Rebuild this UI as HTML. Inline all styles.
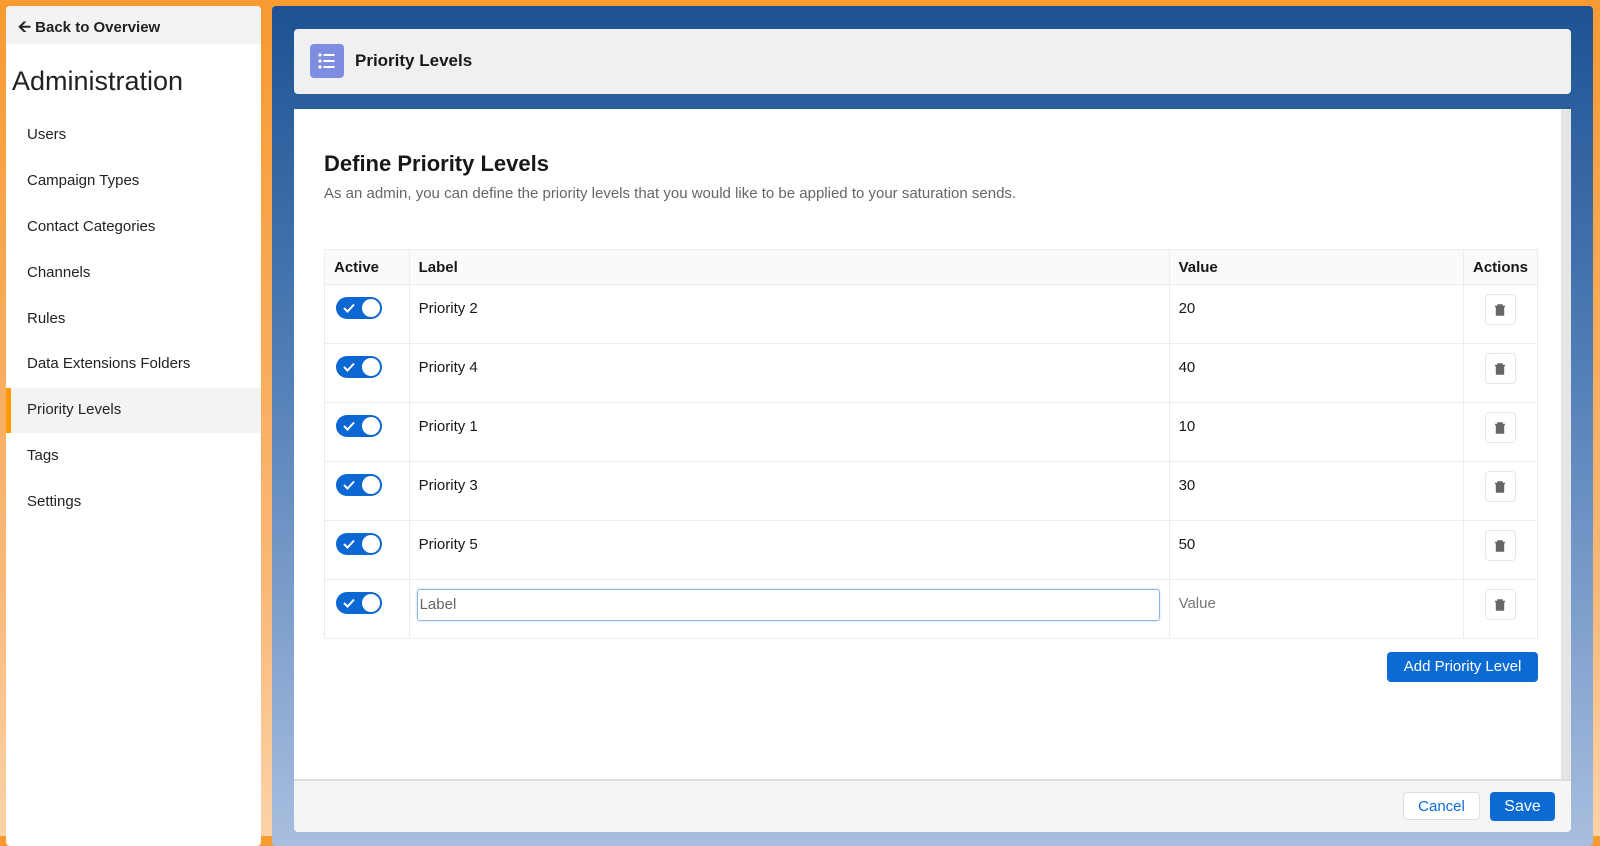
<!DOCTYPE html>
<html><head><meta charset="utf-8"><style>
*{box-sizing:border-box;margin:0;padding:0}
body{width:1600px;height:836px;overflow:hidden;background:linear-gradient(#f79a30,#f9b878 70%,#fbd3a8);font-family:"Liberation Sans",sans-serif;position:relative;color:#16325c}
.side{position:absolute;left:6px;top:6px;width:255px;height:840px;background:#fff;border-radius:4px;overflow:hidden}
.back{height:38px;background:#f3f3f3;font-size:15px;font-weight:bold;color:#222;padding:10px 0 0 12px}
.adm{position:absolute;left:6px;top:60px;font-size:27px;color:#222;font-weight:300}
.nav{position:absolute;left:0;width:255px;height:45px;font-size:15px;color:#222;padding:13px 0 0 21px}
.nav.sel{background:#f3f3f3;border-left:5px solid #ff9a00;padding-left:16px}
.main{position:absolute;left:272px;top:6px;width:1321px;height:840px;background:linear-gradient(#1d5393,#4d7bb5 40%,#a8bedf);border-radius:4px}
.hdr{position:absolute;left:294px;top:29px;width:1277px;height:65px;background:#f0f0f0;border-radius:4px}
.icon{position:absolute;left:16px;top:15px;width:34px;height:34px;background:#7f8de1;border-radius:4px}
.hdr .t{position:absolute;left:61px;top:22px;font-size:17px;font-weight:bold;color:#181818}
.card{position:absolute;left:294px;top:109px;width:1267px;height:670px;background:#fff}
.sb{position:absolute;left:1561px;top:109px;width:10px;height:670px;background:#e5e5e5}
.foot{position:absolute;left:294px;top:779px;width:1277px;height:53px;background:#f5f5f5;border-top:2px solid #ddd;border-radius:0 0 4px 4px}
h1{position:absolute;left:324px;top:151px;font-size:22px;color:#181818}
.sub{position:absolute;left:324px;top:185px;font-size:15px;color:#666}
table{position:absolute;left:324px;top:249px;width:1214px;border-collapse:collapse;font-size:15px;color:#181818}
td,th{border:1px solid #ececec;text-align:left;padding:0 9px}
th{height:35px;background:#fafaf9;font-weight:bold}
td{height:59px;vertical-align:top;padding-top:15px}
.tg{width:46px;height:22px;background:#0b67d1;border-radius:11px;position:relative;margin-top:-3px;margin-left:2px}
.tg:after{content:"";position:absolute;right:2px;top:2px;width:18px;height:18px;border-radius:50%;background:#fff}
.tg svg{position:absolute;left:7px;top:6px}
.tr{width:31px;height:31px;border:1px solid #e5e5e5;border-radius:4px;margin:-6px auto 0;display:flex;align-items:center;justify-content:center}
.inp{width:743px;height:32px;border:1px solid #8fb3e6;border-radius:3px;margin:-6px 0 0 -2px;padding:6px 2px;color:#666;box-shadow:0 0 2px #b9d2f3}
.btn{position:absolute;background:#0b6bd3;color:#fff;font-size:15px;border-radius:4px;text-align:center}
</style></head><body>
<div class="side">
<div class="back"><span style="font-size:16px">&#129128;</span> Back to Overview</div>
<div class="adm">Administration</div>
<div class="nav" style="top:107px">Users</div>
<div class="nav" style="top:153px">Campaign Types</div>
<div class="nav" style="top:199px">Contact Categories</div>
<div class="nav" style="top:245px">Channels</div>
<div class="nav" style="top:291px">Rules</div>
<div class="nav" style="top:336px">Data Extensions Folders</div>
<div class="nav sel" style="top:382px">Priority Levels</div>
<div class="nav" style="top:428px">Tags</div>
<div class="nav" style="top:474px">Settings</div>
</div>
<div class="main"></div>
<div class="hdr"><div class="icon"><svg width="34" height="34"><g fill="#fff"><circle cx="10" cy="11" r="1.6"/><circle cx="10" cy="17" r="1.6"/><circle cx="10" cy="23" r="1.6"/><rect x="13.5" y="10" width="11" height="2"/><rect x="13.5" y="16" width="11" height="2"/><rect x="13.5" y="22" width="11" height="2"/></g></svg></div><div class="t">Priority Levels</div></div>
<div class="card"></div><div class="sb"></div>
<h1>Define Priority Levels</h1>
<div class="sub">As an admin, you can define the priority levels that you would like to be applied to your saturation sends.</div>
<table>
<tr><th style="width:85px">Active</th><th style="width:757px">Label</th><th style="width:300px">Value</th><th>Actions</th></tr>
<tr><td><div class="tg"><svg width="12" height="10"><path d="M1 5l3.5 3.5L11 1.5" stroke="#fff" stroke-width="2" fill="none"/></svg></div></td><td>Priority 2</td><td>20</td><td><div class="tr"><svg width="12" height="12"><path d="M1 2.5h10M4 2.5V1h4v1.5M2.5 4h7v7h-7z" stroke="#666" stroke-width="1.4" fill="#666"/></svg></div></td></tr>
<tr><td><div class="tg"><svg width="12" height="10"><path d="M1 5l3.5 3.5L11 1.5" stroke="#fff" stroke-width="2" fill="none"/></svg></div></td><td>Priority 4</td><td>40</td><td><div class="tr"><svg width="12" height="12"><path d="M1 2.5h10M4 2.5V1h4v1.5M2.5 4h7v7h-7z" stroke="#666" stroke-width="1.4" fill="#666"/></svg></div></td></tr>
<tr><td><div class="tg"><svg width="12" height="10"><path d="M1 5l3.5 3.5L11 1.5" stroke="#fff" stroke-width="2" fill="none"/></svg></div></td><td>Priority 1</td><td>10</td><td><div class="tr"><svg width="12" height="12"><path d="M1 2.5h10M4 2.5V1h4v1.5M2.5 4h7v7h-7z" stroke="#666" stroke-width="1.4" fill="#666"/></svg></div></td></tr>
<tr><td><div class="tg"><svg width="12" height="10"><path d="M1 5l3.5 3.5L11 1.5" stroke="#fff" stroke-width="2" fill="none"/></svg></div></td><td>Priority 3</td><td>30</td><td><div class="tr"><svg width="12" height="12"><path d="M1 2.5h10M4 2.5V1h4v1.5M2.5 4h7v7h-7z" stroke="#666" stroke-width="1.4" fill="#666"/></svg></div></td></tr>
<tr><td><div class="tg"><svg width="12" height="10"><path d="M1 5l3.5 3.5L11 1.5" stroke="#fff" stroke-width="2" fill="none"/></svg></div></td><td>Priority 5</td><td>50</td><td><div class="tr"><svg width="12" height="12"><path d="M1 2.5h10M4 2.5V1h4v1.5M2.5 4h7v7h-7z" stroke="#666" stroke-width="1.4" fill="#666"/></svg></div></td></tr>
<tr><td><div class="tg"><svg width="12" height="10"><path d="M1 5l3.5 3.5L11 1.5" stroke="#fff" stroke-width="2" fill="none"/></svg></div></td><td><div class="inp">Label</div></td><td style="color:#777">Value</td><td><div class="tr"><svg width="12" height="12"><path d="M1 2.5h10M4 2.5V1h4v1.5M2.5 4h7v7h-7z" stroke="#666" stroke-width="1.4" fill="#666"/></svg></div></td></tr>
</table>
<div class="btn" style="left:1387px;top:652px;width:151px;height:30px;line-height:30px">Add Priority Level</div>
<div class="foot"></div>
<div class="btn" style="left:1403px;top:792px;width:77px;height:28px;line-height:28px;background:#fff;border:1px solid #ddd;color:#0b6bd3">Cancel</div>
<div class="btn" style="left:1490px;top:792px;width:65px;height:29px;line-height:29px;font-size:16px">Save</div>
</body></html>
